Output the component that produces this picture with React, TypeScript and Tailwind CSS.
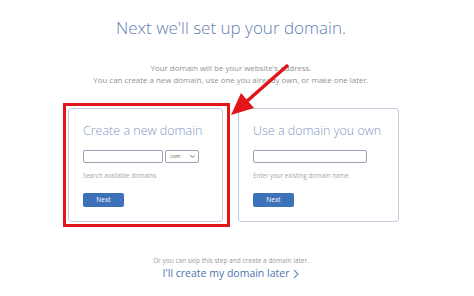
import { ChevronDown } from "lucide-react";

function NextButton() {
  return (
    <button className="block w-[41px] h-[14px] rounded-[2px] bg-[#3d72b8] text-white text-[6.5px] leading-[14px] text-center">
      Next
    </button>
  );
}

function DomainCard({
  title,
  hint,
  withTld,
  width,
}: {
  title: string;
  hint: string;
  withTld?: boolean;
  width: string;
}) {
  return (
    <div className={`${width} h-[114px] border border-[#c3cddc] rounded-[3px] bg-white pl-[14px] pt-[14px]`}>
      <div className="text-[12.5px] leading-[16px] font-light text-[#8197bf] whitespace-nowrap">{title}</div>
      <div className="mt-[11px] flex gap-[2px]">
        <div className={`${withTld ? "w-[80px]" : "w-[114px]"} h-[13px] border border-[#98a3b3] rounded-[2px] bg-white`} />
        {withTld && (
          <div className="w-[34px] h-[13px] border border-[#98a3b3] rounded-[2px] bg-white flex items-center justify-between pl-[3px] pr-[2px]">
            <span className="text-[5px] leading-[13px] text-[#666]">.com</span>
            <ChevronDown className="w-[7px] h-[7px] text-[#555]" strokeWidth={3} />
          </div>
        )}
      </div>
      <div className="mt-[8px] text-[6.2px] leading-[10px] text-[#a5a5a5] whitespace-nowrap">{hint}</div>
      <div className="mt-[12px]">
        <NextButton />
      </div>
    </div>
  );
}

export default function App() {
  return (
    <div className="relative w-[474px] h-[296px] bg-white overflow-hidden font-['Open_Sans',sans-serif]">
      <div className="w-[462px] flex flex-col items-center">
        <h1 className="mt-[16px] text-[17px] leading-[24px] font-light text-[#5f80b2] whitespace-nowrap">
          Next we'll set up your domain.
        </h1>
        <p className="mt-[22px] text-[7.9px] leading-[12px] text-[#929292] text-center whitespace-nowrap">
          Your domain will be your website's address.
          <br />
          You can create a new domain, use one you already own, or make one later.
        </p>
        <div className="self-stretch mt-[17px] pl-[63px] flex items-start gap-[8px]">
          <div className="border-[3px] border-[#e2151b] pl-[2px] pr-[4px] py-[2px]">
            <DomainCard title="Create a new domain" hint="Search available domains" withTld width="w-[155px]" />
          </div>
          <div className="pt-[5px]">
            <DomainCard title="Use a domain you own" hint="Enter your existing domain name" width="w-[161px]" />
          </div>
        </div>
        <p className="mt-[29px] text-[6.5px] leading-[10px] text-[#9a9a9a] whitespace-nowrap">
          Or you can skip this step and create a domain later.
        </p>
        <a className="text-[10.5px] leading-[15px] text-[#4d74ae] flex items-center gap-[4px] whitespace-nowrap">
          I'll create my domain later
          <svg width="6" height="10" viewBox="0 0 6 10" fill="none">
            <path d="M1 1 L5 5 L1 9" stroke="#6b8cbd" strokeWidth="1.1" />
          </svg>
        </a>
      </div>

      <svg className="absolute inset-0 pointer-events-none" width="474" height="296" viewBox="0 0 474 296">
        <line x1="288" y1="65" x2="246" y2="102" stroke="#e2151b" strokeWidth="3.5" />
        <polygon points="231,115 241,93 254,108" fill="#e2151b" />
      </svg>
    </div>
  );
}
